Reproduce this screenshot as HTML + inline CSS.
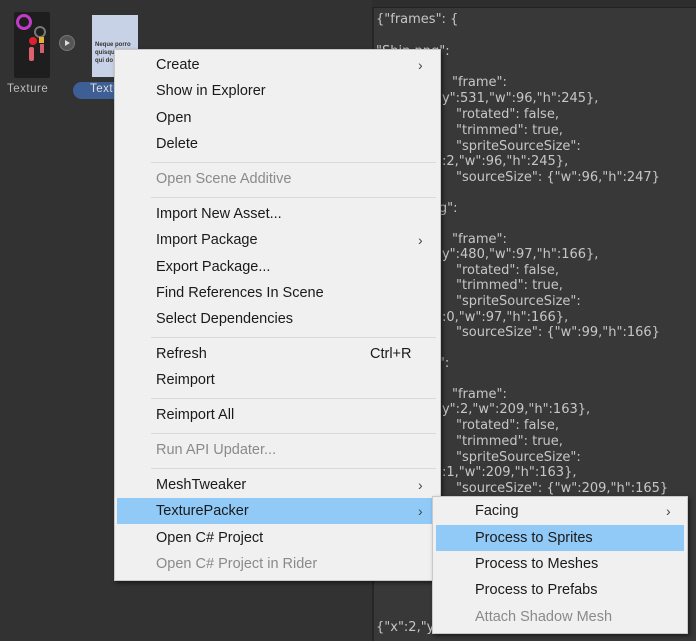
<!DOCTYPE html>
<html><head><meta charset="utf-8"><style>
*{margin:0;padding:0;box-sizing:border-box}
body{width:696px;height:641px;overflow:hidden;background:#323232;position:relative;font-family:"Liberation Sans","Noto Sans CJK SC",sans-serif}
.a{position:absolute}
#right{left:372px;top:0;width:324px;height:641px;background:#383838;border-left:2px solid #262626}
#rtop{left:372px;top:0;width:324px;height:8px;background:#2e2e2e;border-bottom:1px solid #222}
.j{position:absolute;font-family:"DejaVu Sans",sans-serif;font-size:13px;color:#c6c6c6;white-space:pre;line-height:16px}
#menu{left:114px;top:49px;width:327px;height:532px;background:#f0f0f0;border:1px solid #c8c8c8;box-shadow:2px 2px 4px rgba(0,0,0,.5)}
#sub{left:432px;top:496px;width:256px;height:138px;background:#f0f0f0;border:1px solid #c8c8c8;box-shadow:2px 2px 4px rgba(0,0,0,.5)}
.i{position:absolute;font-size:14.5px;color:#1a1a1a;white-space:nowrap;line-height:20px}
.d{color:#8a8a8a}
.s{position:absolute;height:1px;background:#d9d9d9}
.ar{position:absolute;font-size:14px;color:#444;line-height:20px}
.hl{position:absolute;background:#91c9f7}
</style></head><body>
<div class="a" id="right"></div>
<div class="a" id="rtop"></div>

<div class="a" style="left:14px;top:12px;width:36px;height:66px;background:#1e1e1e;border-radius:2px"></div>
<div class="a" style="left:16px;top:14px;width:16px;height:16px;border:3px solid #c03cc8;border-radius:50%"></div>
<div class="a" style="left:34px;top:26px;width:12px;height:12px;border:2px solid #777;border-radius:50%"></div>
<div class="a" style="left:29px;top:37px;width:8px;height:8px;background:#e02030;border-radius:50%"></div>
<div class="a" style="left:39px;top:37px;width:5px;height:6px;background:#e8b030"></div>
<div class="a" style="left:29px;top:47px;width:5px;height:14px;background:#e06070;border-radius:2px"></div>
<div class="a" style="left:40px;top:44px;width:4px;height:9px;background:#d06070"></div>
<div class="a" style="left:59px;top:35px;width:16px;height:16px;background:#555;border:1px solid #777;border-radius:50%"></div>
<div class="a" style="left:65px;top:40px;width:0;height:0;border-left:5px solid #ddd;border-top:3px solid transparent;border-bottom:3px solid transparent"></div>
<div class="a" style="left:92px;top:15px;width:46px;height:62px;background:#c8d2e6"></div>
<div class="a" style="left:95px;top:41px;font-size:6px;color:#333;line-height:8px;font-weight:bold">Neque porro<br>quisqu<br>qui do</div>
<div class="a" style="left:7px;top:83px;font-size:11.5px;color:#bbb;letter-spacing:.5px">Texture</div>
<div class="a" style="left:73px;top:82px;width:50px;height:17px;background:#3d5f96;border-radius:9px"></div>
<div class="a" style="left:90px;top:83px;font-size:11.5px;color:#ddd;letter-spacing:.5px">Textu</div>

<div class="j" style="left:376px;top:12px">{"frames": {</div>
<div class="j" style="left:376px;top:44px">"Ship.png":</div>
<div class="j" style="left:452px;top:75px">"frame":</div>
<div class="j" style="left:436px;top:91px">"y":531,"w":96,"h":245},</div>
<div class="j" style="left:456px;top:107px">"rotated": false,</div>
<div class="j" style="left:456px;top:123px">"trimmed": true,</div>
<div class="j" style="left:456px;top:139px">"spriteSourceSize":</div>
<div class="j" style="left:436px;top:154px">":2,"w":96,"h":245},</div>
<div class="j" style="left:456px;top:170px">"sourceSize": {"w":96,"h":247}</div>

<div class="j" style="left:376px;top:201px">"Thing.png":</div>
<div class="j" style="left:452px;top:232px">"frame":</div>
<div class="j" style="left:436px;top:247px">"y":480,"w":97,"h":166},</div>
<div class="j" style="left:456px;top:263px">"rotated": false,</div>
<div class="j" style="left:456px;top:278px">"trimmed": true,</div>
<div class="j" style="left:456px;top:294px">"spriteSourceSize":</div>
<div class="j" style="left:436px;top:310px">":0,"w":97,"h":166},</div>
<div class="j" style="left:456px;top:325px">"sourceSize": {"w":99,"h":166}</div>

<div class="j" style="left:376px;top:356px">"Thin.png":</div>
<div class="j" style="left:452px;top:387px">"frame":</div>
<div class="j" style="left:436px;top:402px">"y":2,"w":209,"h":163},</div>
<div class="j" style="left:456px;top:418px">"rotated": false,</div>
<div class="j" style="left:456px;top:434px">"trimmed": true,</div>
<div class="j" style="left:456px;top:450px">"spriteSourceSize":</div>
<div class="j" style="left:436px;top:465px">":1,"w":209,"h":163},</div>
<div class="j" style="left:456px;top:481px">"sourceSize": {"w":209,"h":165}</div>
<div class="j" style="left:376px;top:620px">{"x":2,"y":2,"w":209,"h":163},</div>

<div class="a" id="menu"></div>
<div class="hl" style="left:117px;top:498px;width:320px;height:26px"></div>
<div class="i" style="left:156px;top:55px">Create</div><div class="ar" style="left:418px;top:55px">›</div>
<div class="i" style="left:156px;top:81px">Show in Explorer</div>
<div class="i" style="left:156px;top:108px">Open</div>
<div class="i" style="left:156px;top:134px">Delete</div>
<div class="s" style="left:151px;top:162px;width:285px"></div>
<div class="i d" style="left:156px;top:169px">Open Scene Additive</div>
<div class="s" style="left:151px;top:197px;width:285px"></div>
<div class="i" style="left:156px;top:204px">Import New Asset...</div>
<div class="i" style="left:156px;top:230px">Import Package</div><div class="ar" style="left:418px;top:230px">›</div>
<div class="i" style="left:156px;top:257px">Export Package...</div>
<div class="i" style="left:156px;top:283px">Find References In Scene</div>
<div class="i" style="left:156px;top:309px">Select Dependencies</div>
<div class="s" style="left:151px;top:337px;width:285px"></div>
<div class="i" style="left:156px;top:344px">Refresh</div><div class="i" style="left:370px;top:344px">Ctrl+R</div>
<div class="i" style="left:156px;top:370px">Reimport</div>
<div class="s" style="left:151px;top:398px;width:285px"></div>
<div class="i" style="left:156px;top:405px">Reimport All</div>
<div class="s" style="left:151px;top:433px;width:285px"></div>
<div class="i d" style="left:156px;top:440px">Run API Updater...</div>
<div class="s" style="left:151px;top:468px;width:285px"></div>
<div class="i" style="left:156px;top:475px">MeshTweaker</div><div class="ar" style="left:418px;top:475px">›</div>
<div class="i" style="left:156px;top:501px">TexturePacker</div><div class="ar" style="left:418px;top:501px">›</div>
<div class="i" style="left:156px;top:528px">Open C# Project</div>
<div class="i d" style="left:156px;top:554px">Open C# Project in Rider</div>

<div class="a" id="sub"></div>
<div class="hl" style="left:436px;top:525px;width:248px;height:26px"></div>
<div class="i" style="left:475px;top:501px">Facing</div><div class="ar" style="left:666px;top:501px">›</div>
<div class="i" style="left:475px;top:528px">Process to Sprites</div>
<div class="i" style="left:475px;top:554px">Process to Meshes</div>
<div class="i" style="left:475px;top:580px">Process to Prefabs</div>
<div class="i d" style="left:475px;top:607px">Attach Shadow Mesh</div>
</body></html>
